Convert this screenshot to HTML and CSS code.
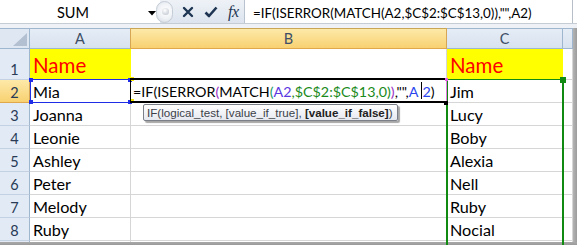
FILE: index.html
```html
<!DOCTYPE html>
<html>
<head>
<meta charset="utf-8">
<link rel="stylesheet" href="styles.css">
</head>
<body>
<div class="app">
  <div class="fbar">
    <div class="namebox">
      <span class="nb-text">SUM</span>
      <svg class="nb-arrow" width="8" height="5" viewBox="0 0 8 5"><polygon points="0,0 8,0 4,4.5" fill="#000"/></svg>
    </div>
    <div class="btnpanel">
      <div class="grip"><span class="dot"></span></div>
      <svg class="ico" width="12" height="12" viewBox="0 0 12 12"><path d="M2 2 L10 10 M10 2 L2 10" stroke="#1d3553" stroke-width="2.4" stroke-linecap="round"/></svg>
      <svg class="ico" width="14" height="12" viewBox="0 0 14 12"><path d="M1.5 6.5 L5 10 L12.5 1.5" stroke="#1d3553" stroke-width="2.6" fill="none" stroke-linejoin="round"/></svg>
      <span class="fx">fx</span>
    </div>
    <div class="finput">=IF(ISERROR(MATCH(A2,$C$2:$C$13,0)),"",A2)</div>
  </div>
  <div class="gapbar"></div>
  <div class="body">
    <div class="sheet">
      <div class="corner"><svg width="14" height="13" viewBox="0 0 14 13"><polygon points="14,0 14,13 0,13" fill="#b3c0d1"/></svg></div>
      <div class="ch">A</div>
      <div class="ch sel">B</div>
      <div class="ch">C</div>
      <div class="ch last"></div>

      <div class="rh">1</div>
      <div class="cell hdr">Name</div>
      <div class="cell"></div>
      <div class="cell hdr">Name</div>
      <div class="cell"></div>

      <div class="rh sel">2</div>
      <div class="cell">Mia</div>
      <div class="cell edit"><span>=IF(ISERROR</span><span class="p2">(</span><span>MATCH</span><span class="p3">(</span><span class="r1">A2</span><span class="r2">,$C$2:$C$13,0)</span><span class="p2">)</span><span>,"",</span><span class="r3">A</span><span class="caret"></span><span class="r3">2</span><span>)</span></div>
      <div class="cell">Jim</div>
      <div class="cell"></div>

      <div class="rh">3</div>
      <div class="cell">Joanna</div>
      <div class="cell"></div>
      <div class="cell">Lucy</div>
      <div class="cell"></div>

      <div class="rh">4</div>
      <div class="cell">Leonie</div>
      <div class="cell"></div>
      <div class="cell">Boby</div>
      <div class="cell"></div>

      <div class="rh">5</div>
      <div class="cell">Ashley</div>
      <div class="cell"></div>
      <div class="cell">Alexia</div>
      <div class="cell"></div>

      <div class="rh">6</div>
      <div class="cell">Peter</div>
      <div class="cell"></div>
      <div class="cell">Nell</div>
      <div class="cell"></div>

      <div class="rh">7</div>
      <div class="cell">Melody</div>
      <div class="cell"></div>
      <div class="cell">Ruby</div>
      <div class="cell"></div>

      <div class="rh">8</div>
      <div class="cell">Ruby</div>
      <div class="cell"></div>
      <div class="cell">Nocial</div>
      <div class="cell"></div>

      <div class="rh"></div>
      <div class="cell"></div>
      <div class="cell"></div>
      <div class="cell"></div>
      <div class="cell"></div>
    </div>
    <div class="vedge"></div>
  </div>
  <div class="hedge"></div>

  <div class="sel-a2"><i class="q tl"></i><i class="q tr"></i><i class="q bl"></i><i class="q br"></i></div>
  <i class="ysq y1"></i><i class="ysq y2"></i>
  <div class="editbox"></div>
  <div class="range-c"><i class="gsq"></i></div>
  <i class="pink-line"></i><i class="pink-sq"></i><i class="fill-handle"></i>
  <div class="tip">IF(logical_test, [value_if_true], <b>[value_if_false]</b>)</div>
</div>
</body>
</html>
```
FILE: styles.css
```css
* { box-sizing: border-box; }
html, body { margin: 0; padding: 0; }
body { background: #fff; }

.app {
  position: relative;
  width: 577px;
  height: 245px;
  overflow: hidden;
  display: flex;
  flex-direction: column;
  background: #fff;
  font-family: Lato, "Liberation Sans", sans-serif;
}

/* formula bar */
.fbar {
  height: 24px;
  display: flex;
  border-bottom: 1px solid #c6ccd4;
  flex: none;
}
.namebox {
  width: 160px;
  display: flex;
  align-items: center;
  padding-top: 1px;
  background: #fff;
}
.nb-text {
  width: 146px;
  text-align: center;
  font-size: 14.5px;
  color: #000;
}
.nb-arrow { margin-left: 2px; margin-top: 2px; }
.btnpanel {
  width: 85px;
  display: flex;
  align-items: center;
  background: linear-gradient(#eef2f7, #dde4ee);
  border-right: 1px solid #b9c3cf;
}
.grip {
  width: 17px;
  height: 22px;
  margin-left: -4px;
  border-radius: 11px;
  background: radial-gradient(circle at 60% 45%, #ffffff 0, #eef1f5 55%, #cfd6df 100%);
  border: 1px solid #c4ccd6;
  display: flex;
  align-items: center;
  justify-content: center;
}
.dot {
  width: 7px;
  height: 7px;
  border-radius: 50%;
  background: radial-gradient(circle at 40% 35%, #ffffff, #b7bfca);
  margin-left: 2px;
}
.ico { margin-left: 10px; }
.btnpanel .ico:first-of-type { margin-left: 9px; }
.fx {
  margin-left: 10px;
  font-family: "Liberation Serif", serif;
  font-style: italic;
  font-size: 16px;
  color: #1d3553;
  letter-spacing: -0.5px;
}
.finput {
  flex: 1;
  padding-left: 8px;
  padding-top: 2px;
  font-size: 13.4px;
  color: #000;
  display: flex;
  align-items: center;
  border-right: 1px solid #b7bec8;
  margin-right: 4px;
}

.gapbar {
  height: 4px;
  flex: none;
  background: #eef1f5;
}

.body {
  flex: 1;
  display: flex;
  min-height: 0;
}
.sheet {
  width: 573px;
  display: grid;
  grid-template-columns: 30px 101px 316px 116px 10px;
  grid-template-rows: 21px 31px repeat(7, 23px) 2px;
  overflow: hidden;
}
.vedge {
  width: 4px;
  background: linear-gradient(90deg, #b4b4b4, #9c9c9c);
}
.hedge {
  height: 3px;
  flex: none;
  background: linear-gradient(#a9a9a9, #9a9a9a);
}

.corner {
  background: #dfe7f2;
  border-top: 1px solid #9eb6ce;
  border-right: 1px solid #9eb6ce;
  border-bottom: 1px solid #9eb6ce;
  display: flex;
  justify-content: flex-end;
  align-items: flex-end;
  padding: 0 2px 2px 0;
}
.ch {
  background: linear-gradient(#e5ecf6, #d8e2ef);
  border-top: 1px solid #9eb6ce;
  border-right: 1px solid #9eb6ce;
  border-bottom: 1px solid #9eb6ce;
  text-align: center;
  font-size: 14.5px;
  line-height: 19px;
  color: #3d4e66;
}
.ch.sel {
  background: linear-gradient(#fde9a9, #f8d171);
  border-top-color: #c9a656;
  border-bottom-color: #e0a84a;
  border-right-color: #d7a655;
  border-left: 1px solid #d7a655;
  margin-left: -1px;
}
.rh {
  background: #e2eaf5;
  border-right: 1px solid #9eb6ce;
  border-bottom: 1px solid #c3d1e3;
  text-align: center;
  font-size: 14.5px;
  color: #283a55;
  display: flex;
  align-items: flex-end;
  justify-content: center;
  padding-bottom: 1px;
}
.rh.sel {
  background: linear-gradient(#fde9a9, #f8d171);
  border-bottom-color: #e0a84a;
  border-right-color: #d7a655;
}

.cell {
  border-right: 1px solid #d6d6d6;
  border-bottom: 1px solid #d6d6d6;
  font-size: 16.2px;
  color: #000;
  display: flex;
  align-items: flex-end;
  padding-left: 3px;
  padding-bottom: 1px;
  white-space: nowrap;
}
.cell.hdr {
  background: #ffff00;
  color: #ff0000;
  font-size: 20.5px;
  padding-bottom: 2px;
  border-color: #ffff00;
  border-bottom-color: #d6d6d6;
}
.cell.edit {
  font-size: 14.3px;
  padding-left: 2px;
  padding-bottom: 2px;
  overflow: visible;
}
.p2 { color: #9b2fc4; }
.p3 { color: #1a9a63; }
.r1 { color: #5a37df; }
.r2 { color: #1a8a1a; }
.r3 { color: #2b45ee; }
.caret {
  display: inline-block;
  width: 1px;
  height: 17px;
  background: #000;
  margin: 0 1px 0 2px;
  align-self: center;
}

/* overlays */
.sel-a2 {
  position: absolute;
  left: 30px;
  top: 79px;
  width: 101px;
  height: 24px;
  border: 1px solid #1f2de6;
}
.q {
  position: absolute;
  width: 4px;
  height: 4px;
  background: #1f2de6;
}
.q.tl { left: -2px; top: -2px; }
.q.tr { right: -2px; top: -2px; }
.q.bl { left: -2px; bottom: -2px; }
.q.br { right: -2px; bottom: -2px; }
.ysq {
  position: absolute;
  width: 3px;
  height: 4px;
  background: #f5e600;
  left: 131px;
}
.y1 { top: 77px; }
.y2 { top: 99px; }
.editbox {
  position: absolute;
  left: 130px;
  top: 78px;
  width: 316px;
  height: 25px;
  border-top: 2px solid #000;
  border-bottom: 2px solid #000;
  border-left: 1px solid #000;
}
.range-c {
  position: absolute;
  left: 446px;
  top: 79px;
  width: 118px;
  height: 180px;
  border: 2px solid #108a10;
  border-top-width: 1px;
}
.gsq {
  position: absolute;
  right: -4px;
  top: -3px;
  width: 6px;
  height: 6px;
  background: #108a10;
}
.pink-line {
  position: absolute;
  left: 446px;
  top: 80px;
  width: 1px;
  height: 21px;
  background: #e07ae0;
}
.pink-sq {
  position: absolute;
  left: 445px;
  top: 78px;
  width: 3px;
  height: 3px;
  background: #e060e0;
}
.fill-handle {
  position: absolute;
  left: 444px;
  top: 101px;
  width: 4px;
  height: 4px;
  background: #000;
}
.tip {
  position: absolute;
  left: 143px;
  top: 104px;
  height: 17px;
  padding: 0 4px 0 3px;
  border: 1px solid #7a7f88;
  border-radius: 2px;
  background: linear-gradient(#ffffff, #e6e8f0);
  box-shadow: 2px 2px 1px rgba(0, 0, 0, 0.35);
  font-family: "Liberation Sans", sans-serif;
  font-size: 11.6px;
  line-height: 15px;
  color: #3b3f48;
  white-space: nowrap;
}
.tip b { color: #222; }
```
